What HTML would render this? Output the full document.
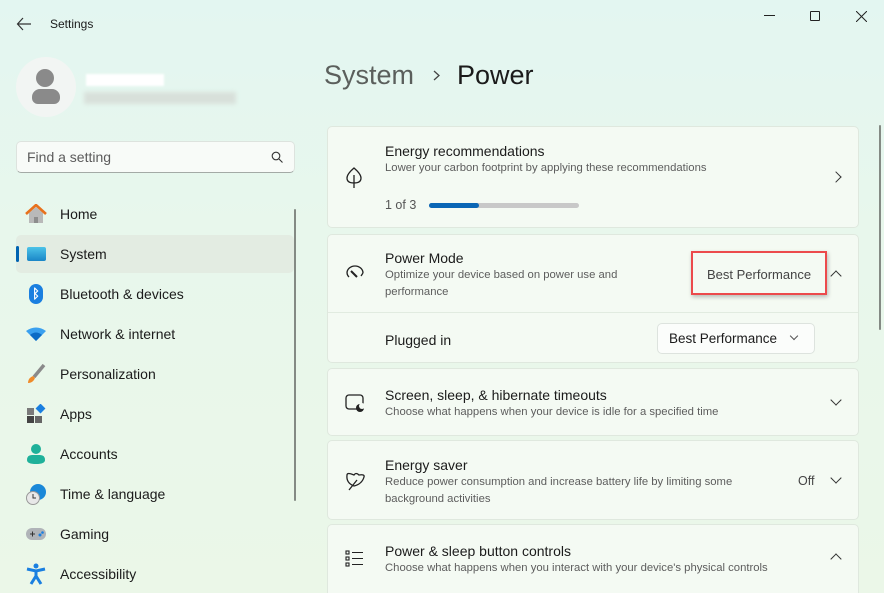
<!DOCTYPE html>
<html><head><meta charset="utf-8"><style>
*{margin:0;padding:0;box-sizing:border-box}
html,body{width:884px;height:593px;overflow:hidden}
body{font-family:"Liberation Sans",sans-serif;color:#1b1b1b;background:linear-gradient(180deg,#e3f6f1 0%,#e8f7ec 40%,#ebf7e8 100%);position:relative}
.a{position:absolute}
.nav{position:absolute;left:16px;width:278px;height:38px;display:flex;align-items:center;font-size:14px}
.nav .ic{width:22px;height:22px;margin-left:9px;margin-right:13px;display:flex;align-items:center;justify-content:center}
.card{position:absolute;left:327px;width:532px;background:#f4faf3;border:1px solid #dfe8de;border-radius:5px}
.t{position:absolute;left:57px;font-size:14px;color:#1b1b1b}
.d{position:absolute;left:57px;font-size:11.3px;color:#5d5d5d;line-height:17px}
.chev{position:absolute;right:18px;width:8px;height:8px;border-right:1.3px solid #333;border-bottom:1.3px solid #333}
.icn{position:absolute;left:17px}
</style></head><body>
<svg class="a" style="left:16px;top:17px" width="16" height="14" viewBox="0 0 16 14"><path d="M7 1L1.5 7 7 13M1.5 7H15" fill="none" stroke="#333" stroke-width="1.2"/></svg>
<div class="a" style="left:50px;top:17px;font-size:12px">Settings</div>
<div class="a" style="left:764px;top:15px;width:11px;height:1px;background:#222"></div>
<div class="a" style="left:810px;top:11px;width:10px;height:10px;border:1px solid #222;border-radius:1px"></div>
<svg class="a" style="left:856px;top:11px" width="11" height="11"><path d="M0 0L11 11M11 0L0 11" stroke="#222" stroke-width="1"/></svg>
<div class="a" style="left:16px;top:57px;width:60px;height:60px;border-radius:50%;background:#f2f5f3"></div>
<div class="a" style="left:36px;top:69px;width:18px;height:18px;border-radius:50%;background:#8a8a8a"></div>
<div class="a" style="left:32px;top:89px;width:28px;height:15px;border-radius:8px 8px 6px 6px;background:#8a8a8a"></div>
<div class="a" style="left:86px;top:74px;width:78px;height:12px;background:#fff;filter:blur(1px)"></div>
<div class="a" style="left:84px;top:92px;width:152px;height:12px;background:#d8e0da;filter:blur(2px)"></div>
<div class="a" style="left:16px;top:141px;width:279px;height:32px;background:#f8fbf8;border:1px solid #dde3de;border-bottom-color:#a4aaa6;border-radius:5px"></div>
<div class="a" style="left:27px;top:149px;font-size:14px;color:#5b5b5b">Find a setting</div>
<svg class="a" style="left:271px;top:151px" width="12" height="12"><circle cx="5" cy="5" r="3.8" fill="none" stroke="#333" stroke-width="1.1"/><path d="M8 8L11.5 11.5" stroke="#333" stroke-width="1.1"/></svg>
<div class="nav" style="top:195px"><div class="ic"><svg width="22" height="20" viewBox="0 0 22 20"><path d="M4 9V19H18V9L11 3Z" fill="#b9b9b9"/><path d="M9 19V13H13V19" fill="#8d8d8d"/><path d="M1 10L11 1L21 10" fill="none" stroke="#e8711c" stroke-width="2.6"/></svg></div>Home</div>
<div class="nav" style="top:235px;background:#e3ece2;border-radius:5px"><div class="a" style="left:0;top:11px;width:3px;height:16px;background:#0063b1;border-radius:2px"></div><div class="ic"><div style="width:19px;height:14px;background:linear-gradient(180deg,#4cc3e8,#1a86c7);border-radius:2px"></div></div>System</div>
<div class="nav" style="top:275px"><div class="ic"><div style="width:14px;height:20px;border-radius:7px;background:#1a7fe0;color:#fff;font-size:13px;text-align:center;line-height:20px;font-weight:bold">ᛒ</div></div>Bluetooth &amp; devices</div>
<div class="nav" style="top:315px"><div class="ic"><svg width="20" height="14" viewBox="0 0 20 14"><path d="M10 14L0 4Q10-3 20 4Z" fill="#3aa0ef"/><path d="M10 14L4 8Q10 3 16 8Z" fill="#0c6bc5"/></svg></div>Network &amp; internet</div>
<div class="nav" style="top:355px"><div class="ic"><svg width="20" height="20"><path d="M18 1L8 13" stroke="#8a8a8a" stroke-width="3.5"/><path d="M7 12Q2 14 2 19Q7 19 9 14Z" fill="#ef8b2a"/></svg></div>Personalization</div>
<div class="nav" style="top:395px"><div class="ic"><svg width="20" height="20"><rect x="1" y="4" width="7" height="7" fill="#7a7a7a"/><rect x="1" y="12" width="7" height="7" fill="#444"/><rect x="9" y="12" width="7" height="7" fill="#666"/><rect x="11" y="1" width="7" height="7" fill="#1a7fe0" transform="rotate(45 14.5 4.5)"/></svg></div>Apps</div>
<div class="nav" style="top:435px"><div class="ic"><svg width="20" height="20"><circle cx="10" cy="5" r="5" fill="#1fb19a"/><path d="M1 16Q1 11 6 11H14Q19 11 19 16Q19 20 10 20Q1 20 1 16Z" fill="#1fb19a"/></svg></div>Accounts</div>
<div class="nav" style="top:475px"><div class="ic"><svg width="22" height="22"><circle cx="13" cy="9" r="8" fill="#1a88d8"/><circle cx="8" cy="15" r="6.5" fill="#e8e8e8" stroke="#999"/><path d="M8 11V15H11" stroke="#333" fill="none"/></svg></div>Time &amp; language</div>
<div class="nav" style="top:515px"><div class="ic"><svg width="22" height="14"><rect x="1" y="1" width="20" height="12" rx="6" fill="#b0b4b8"/><path d="M5 7H10M7.5 4.5V9.5" stroke="#333"/><circle cx="15" cy="8" r="1.5" fill="#1a7fe0"/><circle cx="17.5" cy="5.5" r="1.3" fill="#1a7fe0"/></svg></div>Gaming</div>
<div class="nav" style="top:555px"><div class="ic"><svg width="20" height="22"><circle cx="10" cy="3" r="2.5" fill="#1a7fe0"/><path d="M1 6L10 8L19 6M10 8V13L5 21M10 13L15 21" stroke="#1a7fe0" stroke-width="3" fill="none"/></svg></div>Accessibility</div>
<div class="a" style="left:294px;top:209px;width:2px;height:292px;background:#848a84;border-radius:1px"></div>
<div class="a" style="left:879px;top:125px;width:2px;height:205px;background:#848a84;border-radius:1px"></div>
<div class="a" style="left:324px;top:60px;font-size:27px;color:#5b5f5c">System</div>
<svg class="a" style="left:433px;top:70px" width="8" height="11"><path d="M1 1L6 5.5L1 10" fill="none" stroke="#444" stroke-width="1.3"/></svg>
<div class="a" style="left:457px;top:60px;font-size:27px;color:#1b1b1b">Power</div>
<div class="card" style="top:126px;height:102px">
<svg class="icn" style="top:40px" width="18" height="22" viewBox="0 0 18 22"><path d="M9 1Q2 7 2 11Q2 16 9 16Q16 16 16 11Q16 7 9 1Z M9 8V21" fill="none" stroke="#222" stroke-width="1.3"/></svg>
<div class="t" style="top:16px">Energy recommendations</div>
<div class="d" style="top:33px">Lower your carbon footprint by applying these recommendations</div>
<div class="a" style="left:57px;top:71px;font-size:12.5px;color:#555">1 of 3</div>
<div class="a" style="left:101px;top:76px;width:150px;height:5px;background:#c8c8c8;border-radius:3px"></div>
<div class="a" style="left:101px;top:76px;width:50px;height:5px;background:#0a66b5;border-radius:3px"></div>
<div class="chev" style="top:46px;transform:rotate(-45deg)"></div>
</div>
<div class="card" style="top:234px;height:129px">
<svg class="icn" style="top:30px" width="20" height="16" viewBox="0 0 20 16"><path d="M2 8A8 7 0 0 1 18 8" fill="none" stroke="#222" stroke-width="1.3"/><path d="M2 8A8 7 0 0 0 4 12M18 8L16 11" fill="none" stroke="#222" stroke-width="1.3"/><path d="M6 6L12 12" stroke="#222" stroke-width="2"/></svg>
<div class="t" style="top:15px">Power Mode</div>
<div class="d" style="top:32px">Optimize your device based on power use and<br>performance</div>
<div class="a" style="left:379px;top:32px;font-size:13px;color:#444">Best Performance</div>
<div class="chev" style="top:37px;transform:rotate(-135deg)"></div>
<div class="a" style="left:0;top:77px;width:530px;height:1px;background:#e1ebe0"></div>
<div class="t" style="top:97px">Plugged in</div>
<div class="a" style="left:329px;top:88px;width:158px;height:31px;background:#fbfdfb;border:1px solid #dde3de;border-radius:5px"></div>
<div class="a" style="left:341px;top:96px;font-size:13.5px">Best Performance</div>
<div class="a" style="left:463px;top:98px;width:6px;height:6px;border-right:1px solid #555;border-bottom:1px solid #555;transform:rotate(45deg)"></div>
</div>
<div class="a" style="left:691px;top:251px;width:136px;height:44px;border:2.5px solid #ec4a4c;box-shadow:1px 2px 4px rgba(0,0,0,.25)"></div>
<div class="card" style="top:368px;height:68px">
<svg class="icn" style="top:24px" width="20" height="20"><rect x="1" y="2" width="17" height="14" rx="3" fill="none" stroke="#222" stroke-width="1.3"/><circle cx="15" cy="15" r="4" fill="#222"/><circle cx="17" cy="13" r="3" fill="#f4faf3"/></svg>
<div class="t" style="top:18px">Screen, sleep, &amp; hibernate timeouts</div>
<div class="d" style="top:35px">Choose what happens when your device is idle for a specified time</div>
<div class="chev" style="top:27px;transform:rotate(45deg)"></div>
</div>
<div class="card" style="top:440px;height:80px">
<svg class="icn" style="top:30px" width="22" height="20"><path d="M9 4Q2 1 2 4Q1 12 9 15Q17 13 19 6Q20 3 14 4Q11 1 9 4Z" fill="none" stroke="#222" stroke-width="1.3"/><path d="M4 19L12 9" stroke="#222" stroke-width="1.3"/></svg>
<div class="t" style="top:16px">Energy saver</div>
<div class="d" style="top:33px">Reduce power consumption and increase battery life by limiting some<br>background activities</div>
<div class="a" style="left:470px;top:33px;font-size:12.5px;color:#444">Off</div>
<div class="chev" style="top:33px;transform:rotate(45deg)"></div>
</div>
<div class="card" style="top:524px;height:80px">
<svg class="icn" style="top:24px" width="20" height="20"><g fill="none" stroke="#222" stroke-width="1.1"><rect x="1" y="2" width="3" height="3"/><rect x="1" y="8" width="3" height="3"/><rect x="1" y="14" width="3" height="3"/><path d="M7 3.5H18M7 9.5H18M7 15.5H18"/></g></svg>
<div class="t" style="top:18px">Power &amp; sleep button controls</div>
<div class="d" style="top:35px">Choose what happens when you interact with your device's physical controls</div>
<div class="chev" style="top:30px;transform:rotate(-135deg)"></div>
</div>
</body></html>
